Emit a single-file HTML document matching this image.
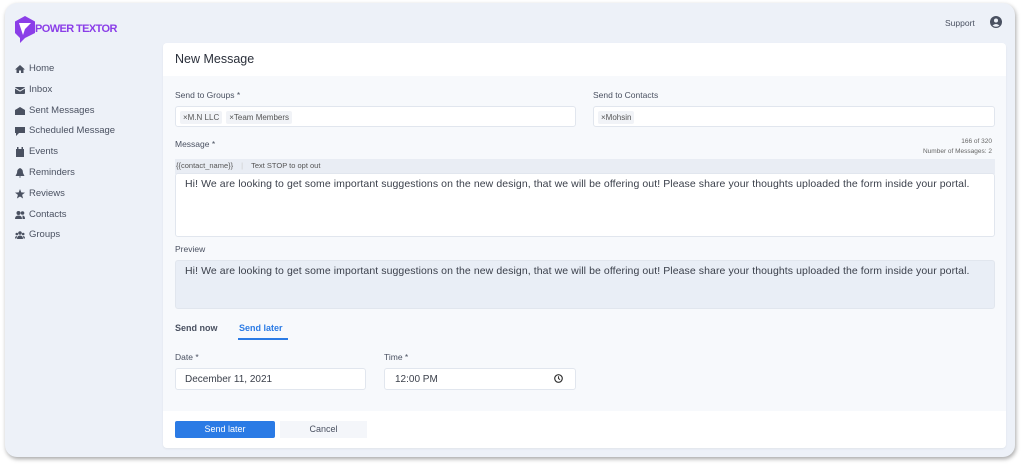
<!DOCTYPE html>
<html><head><style>
*{box-sizing:border-box;margin:0;padding:0}
body{width:1021px;height:465px;background:#fff;font-family:"Liberation Sans",sans-serif;position:relative;overflow:hidden;color:#3c4350}
.frame{position:absolute;left:5px;top:3px;width:1010px;height:454px;background:#edf1f8;border-radius:12px;box-shadow:1px 2px 4px rgba(0,0,0,.35)}
.a{position:absolute}
.nav{position:absolute;left:15px;font-size:9.5px;color:#4a5161;display:flex;align-items:center}
.nav svg{width:10px;height:10px;margin-right:4px;fill:#4a5161}
.lbl{position:absolute;font-size:8.5px;color:#4a5161}
.inp{position:absolute;background:#fff;border:1px solid #e1e6ee;border-radius:3px}
.tag{display:inline-block;background:#f1f3f7;border-radius:2px;font-size:8px;color:#555;padding:2px 3px;margin:3px 0 0 4px}
.msg{font-size:10.5px;color:#3a3f4a;position:absolute;left:9px;top:4px;white-space:nowrap;letter-spacing:.08px}
</style></head><body>
<div class="frame"></div>
<svg class="a" style="left:14px;top:16px" width="22" height="27" viewBox="0 0 22 27"><path d="M11 0 21 5.5V17L11 22 6 27V22L1 17V5.5Z" fill="#8b3ee8"/><path d="M5 7H17L11 13 9 19Z" fill="#fff"/></svg>
<div class="a" style="left:35px;top:23px;font-size:11px;font-weight:bold;color:#8b3ee8;letter-spacing:-.6px">POWER TEXTOR</div>
<div class="a" style="left:945px;top:18px;font-size:8.5px;color:#4a5161">Support</div>
<svg class="a" style="left:990px;top:16px" width="12" height="12" viewBox="0 0 12 12"><circle cx="6" cy="6" r="6" fill="#4a5161"/><circle cx="6" cy="4.5" r="2" fill="#edf1f8"/><path d="M2.5 9.5Q6 6.5 9.5 9.5Q6 12 2.5 9.5Z" fill="#edf1f8"/></svg>

<div class="nav" style="top:63px"><svg viewBox="0 0 10 10"><path d="M5 1 0 5.5H1.5V9H4V6.5H6V9H8.5V5.5H10Z"/></svg>Home</div>
<div class="nav" style="top:84px"><svg viewBox="0 0 10 10"><rect x="0" y="2" width="10" height="7" rx="1"/><path d="M0 3 5 6 10 3" stroke="#edf1f8" fill="none"/></svg>Inbox</div>
<div class="nav" style="top:105px"><svg viewBox="0 0 10 10"><path d="M0 4 5 1 10 4V9H0Z"/></svg>Sent Messages</div>
<div class="nav" style="top:125px"><svg viewBox="0 0 10 10"><path d="M0 1H10V7H4L1 10V7H0Z"/></svg>Scheduled Message</div>
<div class="nav" style="top:146px"><svg viewBox="0 0 10 10"><rect x="1" y="2" width="8" height="8"/><rect x="2" y="0" width="1.5" height="3"/><rect x="6.5" y="0" width="1.5" height="3"/></svg>Events</div>
<div class="nav" style="top:167px"><svg viewBox="0 0 10 10"><path d="M5 0Q8 1 8 5L9.5 8H.5L2 5Q2 1 5 0ZM4 8.5H6L5 10Z"/></svg>Reminders</div>
<div class="nav" style="top:188px"><svg viewBox="0 0 10 10"><path d="M5 0 6.3 3.4 10 3.6 7.1 5.9 8.1 9.5 5 7.5 1.9 9.5 2.9 5.9 0 3.6 3.7 3.4Z"/></svg>Reviews</div>
<div class="nav" style="top:209px"><svg viewBox="0 0 10 10"><circle cx="3.5" cy="3" r="2"/><circle cx="7.5" cy="3" r="1.8"/><path d="M0 9Q0 5.5 3.5 5.5Q7 5.5 7 9ZM7.5 9H10Q10 5.5 7.5 5.5Z"/></svg>Contacts</div>
<div class="nav" style="top:229px"><svg viewBox="0 0 10 10"><circle cx="5" cy="3" r="1.8"/><circle cx="1.8" cy="4" r="1.3"/><circle cx="8.2" cy="4" r="1.3"/><path d="M2 9Q2 5.5 5 5.5Q8 5.5 8 9ZM0 8.5Q0 6 2 6L1.5 8.5ZM10 8.5Q10 6 8 6L8.5 8.5Z"/></svg>Groups</div>

<div class="a" style="left:163px;top:43px;width:843px;height:405px;background:#f7f9fc;border-radius:4px;overflow:hidden;box-shadow:0 1px 2px rgba(0,0,0,.06)">
 <div class="a" style="left:0;top:0;width:843px;height:33px;background:#fff"></div>
 <div class="a" style="left:12px;top:9px;font-size:12.5px;color:#2a2f3a">New Message</div>
 <div class="a" style="left:0;top:368px;width:843px;height:37px;background:#fff"></div>
</div>

<div class="lbl" style="left:175px;top:90px">Send to Groups *</div>
<div class="inp" style="left:175px;top:106px;width:401px;height:21px"><span class="tag">×M.N LLC</span><span class="tag">×Team Members</span></div>
<div class="lbl" style="left:593px;top:90px">Send to Contacts</div>
<div class="inp" style="left:593px;top:106px;width:402px;height:21px"><span class="tag">×Mohsin</span></div>

<div class="lbl" style="left:175px;top:139px">Message *</div>
<div class="a" style="right:29px;top:137px;font-size:6.5px;color:#666;text-align:right;line-height:10px">166 of 320<br>Number of Messages: 2</div>
<div class="a" style="left:175px;top:159px;width:820px;height:15px;background:#e9edf4;font-size:7.5px;color:#555;padding:2px 0 0 1px">{{contact_name}}<span style="color:#ccc;margin:0 8px">|</span>Text STOP to opt out</div>
<div class="inp" style="left:175px;top:173px;width:820px;height:64px"><div class="msg">Hi! We are looking to get some important suggestions on the new design, that we will be offering out! Please share your thoughts uploaded the form inside your portal.</div></div>

<div class="lbl" style="left:175px;top:244px">Preview</div>
<div class="inp" style="left:175px;top:260px;width:820px;height:49px;background:#e9eef6"><div class="msg">Hi! We are looking to get some important suggestions on the new design, that we will be offering out! Please share your thoughts uploaded the form inside your portal.</div></div>

<div class="a" style="left:175px;top:323px;font-size:9px;font-weight:bold;color:#4a5161">Send now</div>
<div class="a" style="left:239px;top:323px;font-size:9px;font-weight:bold;color:#2b7be5">Send later</div>
<div class="a" style="left:238px;top:338px;width:50px;height:2px;background:#2b7be5"></div>

<div class="lbl" style="left:175px;top:352px">Date *</div>
<div class="inp" style="left:175px;top:368px;width:191px;height:22px;font-size:10px;padding:5px 0 0 9px;color:#3a3f4a">December 11, 2021</div>
<div class="lbl" style="left:384px;top:352px">Time *</div>
<div class="inp" style="left:384px;top:368px;width:192px;height:22px;font-size:10px;padding:5px 0 0 10px;color:#3a3f4a">12:00 PM</div>
<svg class="a" style="left:554px;top:374px" width="9" height="9" viewBox="0 0 10 10"><circle cx="5" cy="5" r="4.2" fill="none" stroke="#333" stroke-width="1.3"/><path d="M5 2.5V5L6.7 6.3" fill="none" stroke="#333" stroke-width="1.2"/></svg>

<div class="a" style="left:175px;top:421px;width:100px;height:17px;background:#2b7be5;border-radius:2px;color:#fff;font-size:9px;text-align:center;line-height:17px">Send later</div>
<div class="a" style="left:280px;top:421px;width:87px;height:17px;background:#f4f6fa;color:#4a5161;font-size:9px;text-align:center;line-height:17px">Cancel</div>
</body></html>
